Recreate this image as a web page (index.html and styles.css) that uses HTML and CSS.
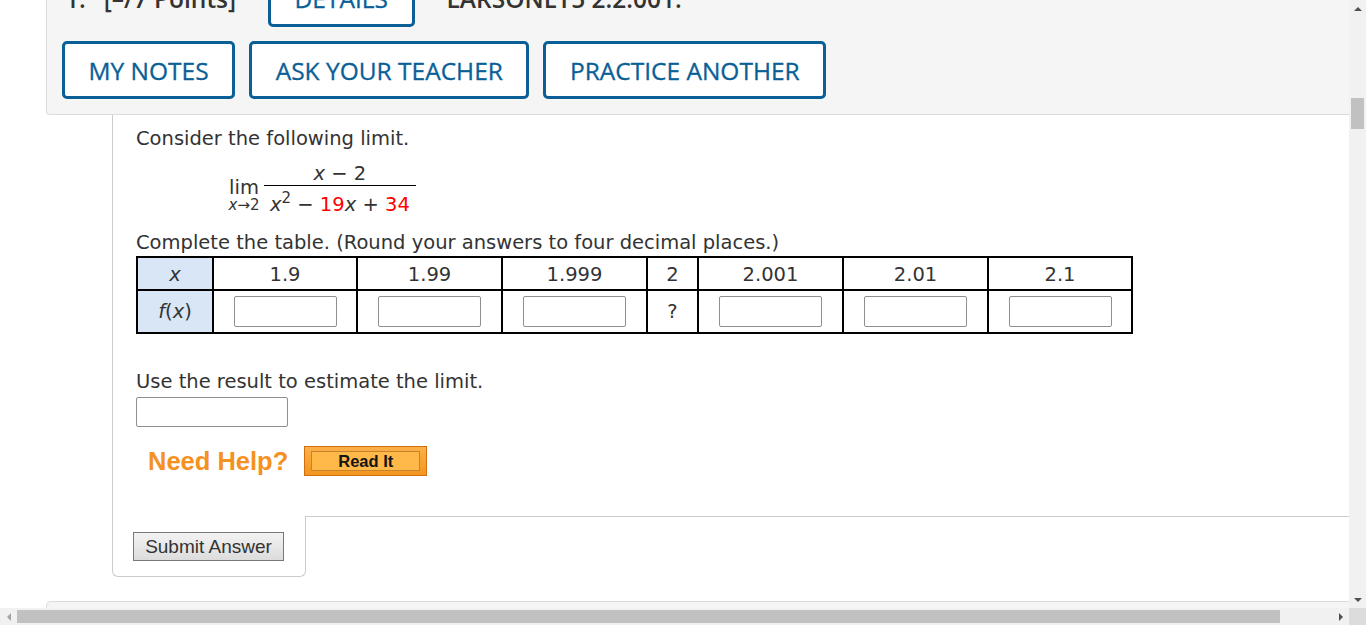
FILE: index.html
```html
<!DOCTYPE html>
<html lang="en">
<head>
<meta charset="utf-8">
<title>Question 1</title>
<link rel="stylesheet" href="styles.css">
</head>
<body>
<div class="frame">
  <div class="viewport">
    <div class="page">
      <div class="qhead">
        <div class="head-row">
          <span class="qnum">1.</span>
          <span class="qpoints">[–/7 Points]</span>
          <span class="btn">DETAILS</span>
          <span class="qcode">LARSONET5 2.2.001.</span>
        </div>
        <div class="btn-row">
          <span class="btn">MY NOTES</span>
          <span class="btn">ASK YOUR TEACHER</span>
          <span class="btn">PRACTICE ANOTHER</span>
        </div>
      </div>

      <div class="qbody">
        <p class="line first">Consider the following limit.</p>
        <div class="limit">
          <div class="lim">
            <span class="lim-word">lim</span>
            <span class="lim-sub"><i>x</i>→2</span>
          </div>
          <div class="frac">
            <div class="num"><i>x</i> − 2</div>
            <div class="den"><i>x</i><sup>2</sup> − <span class="red">19</span><i>x</i> + <span class="red">34</span></div>
          </div>
        </div>
        <p class="line table-intro">Complete the table. (Round your answers to four decimal places.)</p>
        <table class="values">
          <colgroup>
            <col class="c-head">
            <col class="c-wide">
            <col class="c-wide2">
            <col class="c-wide2">
            <col class="c-narrow">
            <col class="c-wide2">
            <col class="c-wide2">
            <col class="c-wide">
          </colgroup>
          <tr class="row-x">
            <th><i>x</i></th>
            <td>1.9</td>
            <td>1.99</td>
            <td>1.999</td>
            <td>2</td>
            <td>2.001</td>
            <td>2.01</td>
            <td>2.1</td>
          </tr>
          <tr class="row-f">
            <th><i>f</i>(<i>x</i>)</th>
            <td><span class="inp"></span></td>
            <td><span class="inp"></span></td>
            <td><span class="inp"></span></td>
            <td>?</td>
            <td><span class="inp"></span></td>
            <td><span class="inp"></span></td>
            <td><span class="inp"></span></td>
          </tr>
        </table>
        <p class="line estimate">Use the result to estimate the limit.</p>
        <span class="inp wide"></span>
        <div class="help-row">
          <span class="need-help">Need Help?</span>
          <span class="read-it"><span class="read-inner">Read It</span></span>
        </div>
      </div>

      <div class="qfoot">
        <div class="submit-tab"><span class="submit">Submit Answer</span></div>
        <div class="foot-rest"></div>
      </div>

      <div class="qhead next"></div>
    </div>
  </div>

  <div class="vscroll">
    <span class="sb-btn"><span class="tri up"></span></span>
    <div class="vtrack"><span class="vthumb"></span></div>
    <span class="sb-btn"><span class="tri down"></span></span>
  </div>

  <div class="hscroll">
    <span class="sb-btn"><span class="tri left"></span></span>
    <div class="htrack"><span class="hthumb"></span></div>
    <span class="sb-btn"><span class="tri right"></span></span>
  </div>
  <div class="corner"></div>
</div>
</body>
</html>
```

FILE: styles.css
```css
* { box-sizing: border-box; }

html, body {
  margin: 0;
  padding: 0;
  background: #fff;
  overflow: hidden;
}

.frame {
  display: grid;
  grid-template-columns: 1fr 17px;
  grid-template-rows: 1fr 17px;
  width: 1366px;
  height: 625px;
}

.viewport {
  overflow: hidden;
  background: #fff;
}

.page {
  width: 1405px;
  margin-top: -45px;
  font-family: "DejaVu Sans", Verdana, sans-serif;
  font-size: 19.5px;
  color: #333;
}

/* ---------- question header ---------- */
.qhead {
  margin-left: 46px;
  background: #f5f5f5;
  border-left: 1px solid #dcdcdc;
  border-bottom: 1px solid #dcdcdc;
  border-radius: 4px 0 0 4px;
  padding: 14px 0 15px 15px;
  display: flex;
  flex-direction: column;
  gap: 14px;
  font-family: "Open Sans", sans-serif;
  font-size: 24.5px;
}

.head-row {
  display: flex;
  align-items: center;
  padding-left: 3px;
  gap: 32px;
  color: #333;
  font-weight: 600;
}

.qnum { margin-right: -14px; }

.btn-row {
  display: flex;
  gap: 14px;
}

.btn {
  display: flex;
  align-items: center;
  height: 58px;
  padding: 0 23.5px;
  border: 3px solid #0b5f97;
  border-radius: 5px;
  background: #fff;
  color: #0b5f97;
  font-weight: 400;
  -webkit-text-stroke: 0.3px #0b5f97;
  white-space: nowrap;
}

/* ---------- question body ---------- */
.qbody {
  margin-left: 112px;
  border-left: 1px solid #cccccc;
  padding: 13px 0 40px 23px;
}

.line {
  margin: 0;
  line-height: 22px;
  white-space: nowrap;
}

.limit {
  display: flex;
  align-items: flex-start;
  margin: 13px 0 0 90px;
}

.lim {
  display: flex;
  flex-direction: column;
  align-items: center;
  width: 36px;
  margin-top: 16px;
}

.lim-word { line-height: 18px; }

.lim-sub {
  font-size: 15px;
  line-height: 14px;
  margin-top: 1px;
  white-space: nowrap;
}

.frac {
  display: flex;
  flex-direction: column;
  align-items: center;
  margin-left: 2px;
  white-space: nowrap;
}

.num {
  align-self: stretch;
  text-align: center;
  line-height: 22px;
  border-bottom: 1px solid #000;
}

.den {
  line-height: 22px;
  padding: 8px 6px 0;
}

.den sup {
  font-size: 15px;
  line-height: 0;
  vertical-align: 8px;
}

.red { color: #ff0000; }

.table-intro { margin-top: 16px; }

.values {
  margin-top: 2px;
  border-collapse: separate;
  border-spacing: 0;
  table-layout: fixed;
  width: 997px;
  border-top: 2px solid #000;
  border-left: 2px solid #000;
}

.c-head { width: 76px; }
.c-wide { width: 144px; }
.c-wide2 { width: 145px; }
.c-narrow { width: 51px; }

.values th,
.values td {
  border-right: 2px solid #000;
  border-bottom: 2px solid #000;
  padding: 0;
  text-align: center;
  vertical-align: middle;
  font-weight: 400;
  color: #333;
}

.values th { background: #d8e6f5; }

.row-x th, .row-x td { height: 33px; padding-top: 2px; }
.row-f th, .row-f td { height: 43px; }

.inp {
  display: inline-block;
  vertical-align: middle;
  width: 103px;
  height: 31px;
  border: 1px solid #8f8f8f;
  border-radius: 2px;
  background: #fff;
}

.estimate { margin-top: 37px; }

.inp.wide {
  display: block;
  width: 152px;
  height: 30px;
  margin-top: 4px;
}

.help-row {
  display: flex;
  align-items: center;
  gap: 16px;
  margin: 19px 0 0 12px;
}

.need-help {
  font-family: "Liberation Sans", Arial, sans-serif;
  font-weight: 700;
  font-size: 25.5px;
  line-height: 30px;
  color: #f5911f;
}

.read-it {
  display: flex;
  width: 123px;
  height: 30px;
  padding: 4px 6px;
  border: 1px solid #cf6f12;
  background: linear-gradient(#fbb047, #f2961f);
}

.read-inner {
  flex: 1;
  display: flex;
  align-items: center;
  justify-content: center;
  border: 1px solid #c7822f;
  background: #ffb948;
  font-family: "Liberation Sans", Arial, sans-serif;
  font-weight: 700;
  font-size: 16.5px;
  color: #141414;
}

/* ---------- footer ---------- */
.qfoot {
  display: flex;
  margin-left: 112px;
}

.submit-tab {
  width: 194px;
  height: 61px;
  border: 1px solid #cccccc;
  border-top: none;
  border-radius: 0 0 6px 6px;
  padding: 16px 0 0 20px;
}

.submit {
  display: flex;
  align-items: center;
  justify-content: center;
  width: 151px;
  height: 29px;
  border: 1px solid #787878;
  background: linear-gradient(#f3f3f3, #dcdcdc);
  font-family: "Liberation Sans", Arial, sans-serif;
  font-size: 19px;
  color: #333;
}

.foot-rest {
  flex: 1;
  border-top: 1px solid #cccccc;
}

.qhead.next {
  margin-top: 24px;
  height: 40px;
  border-top: 1px solid #dcdcdc;
  border-bottom: none;
  border-radius: 5px 0 0 0;
  padding: 0;
}

/* ---------- scrollbars ---------- */
.vscroll {
  display: flex;
  flex-direction: column;
  background: #f1f1f1;
}

.hscroll {
  display: flex;
  background: #f1f1f1;
}

.corner { background: #dcdcdc; }

.sb-btn {
  flex: none;
  width: 17px;
  height: 17px;
  display: flex;
  align-items: center;
  justify-content: center;
}

.tri {
  width: 0;
  height: 0;
  border-style: solid;
}

.tri.up {
  border-width: 0 4px 4px 4px;
  border-color: transparent transparent #505050 transparent;
}

.tri.down {
  border-width: 4px 4px 0 4px;
  border-color: #505050 transparent transparent transparent;
}

.tri.left {
  border-width: 4px 4px 4px 0;
  border-color: transparent #a3a3a3 transparent transparent;
}

.tri.right {
  border-width: 4px 0 4px 4px;
  border-color: transparent transparent transparent #505050;
}

.vtrack {
  flex: 1;
  padding: 81px 2px 0;
}

.vthumb {
  display: block;
  height: 31px;
  background: #c1c1c1;
}

.htrack {
  flex: 1;
  padding: 2px 0;
}

.hthumb {
  display: block;
  width: 1263px;
  height: 13px;
  background: #c1c1c1;
}
```
